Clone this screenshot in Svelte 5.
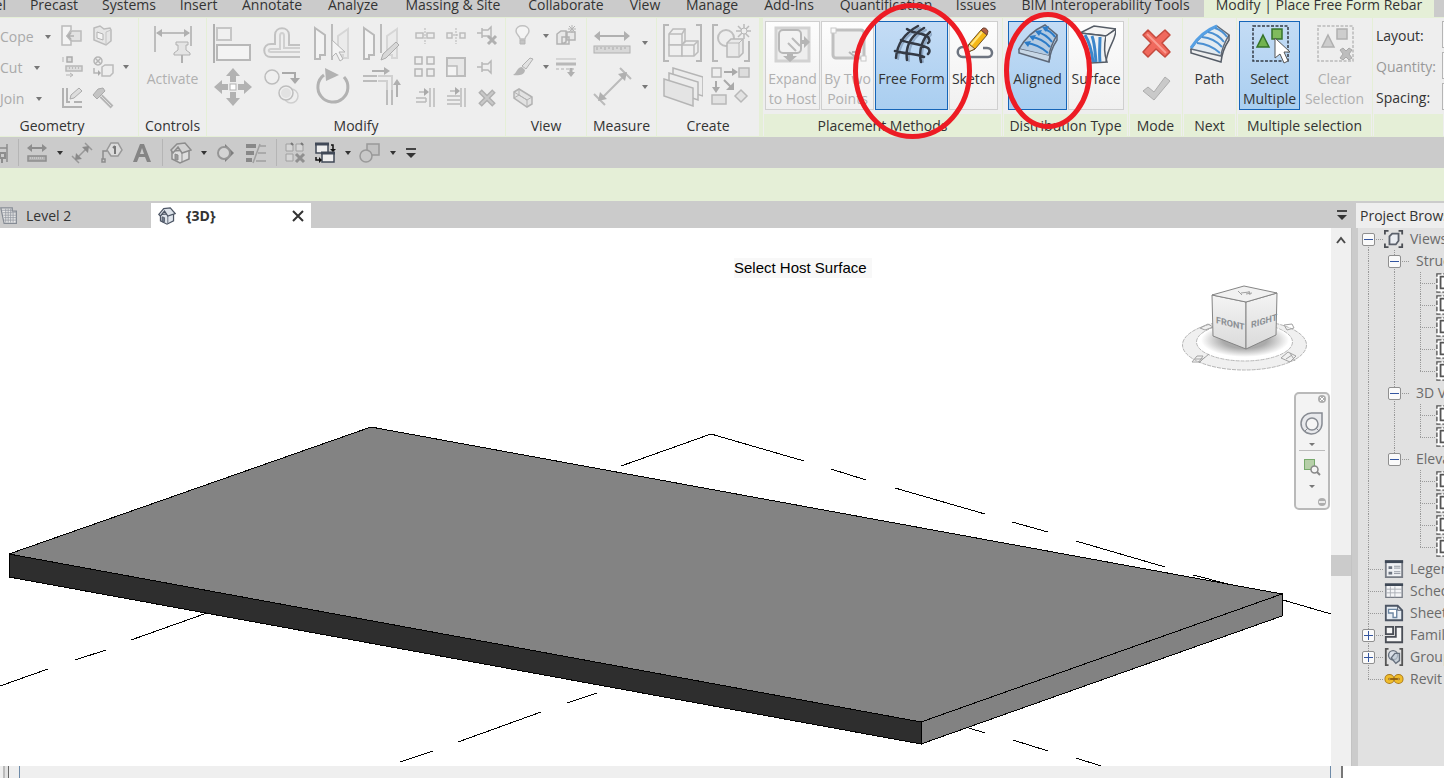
<script>
    const tabs = [
        "Steel",
        "Precast",
        "Systems",
        "Insert",
        "Annotate",
        "Analyze",
        "Massing & Site",
        "Collaborate",
        "View",
        "Manage",
        "Add-Ins",
        "Quantification",
        "Issues",
        "BIM Interoperability Tools",
        "Modify | Place Free Form Rebar",
    ];

    // 40x40 drawings
    const big = {
        activate: `<g fill="none" stroke="#bdbdbd" stroke-width="2"><path d="M2 2v26M38 2v20M4 9h32"/></g><path d="M3 9l6-4v8zM37 9l-6-4v8z" fill="#b0b0b0"/><path d="M23 18h12v3h-2v5l4 3v2H21v-2l4-3v-5h-2z" fill="#e4e4e4" stroke="#b0b0b0"/><path d="M29 31v8" stroke="#b0b0b0" stroke-width="2"/>`,
        align: `<path d="M2 1v39" stroke="#b0b0b0" stroke-width="2"/><rect x="5" y="5" width="14" height="12" fill="#f0f0f0" stroke="#c6c6c6" stroke-width="2"/><rect x="5" y="22" width="33" height="15" fill="#f3f3f3" stroke="#b8b8b8" stroke-width="2"/>`,
        offset: `<g fill="none" stroke="#c2c2c2" stroke-width="2"><path d="M38 22H27V12c0-9-14-9-14 0v9H9c-9 0-9 13 0 13h29"/><path d="M38 29H9c-3 0-3-3 0-3h9V13c0-4 4-4 4 0v12h16" stroke="#d0d0d0"/></g>`,
        mirrorPick: `<path d="M3 5l10 7v20H8v4H3z" fill="#f3f3f3" stroke="#b9b9b9" stroke-width="2"/><path d="M36 6l-10 7v19h5v3h5z" fill="#ebebeb" stroke="#d6d6d6" stroke-width="2"/><path d="M20 1v36" stroke="#bbb" stroke-width="2"/><path d="M20 17v17l4-4 4 8 3-2-4-7h6z" fill="#f4f4f4" stroke="#b4b4b4"/>`,
        mirrorDraw: `<path d="M2 5l10 7v20H7v4H2z" fill="#f3f3f3" stroke="#b9b9b9" stroke-width="2"/><path d="M35 6l-10 7v19h5v3h5z" fill="#ebebeb" stroke="#d6d6d6" stroke-width="2"/><path d="M19 1v29" stroke="#bbb" stroke-width="2"/><path d="M19 37l2-6 13-12 3 3-13 13z" fill="#d8d8d8" stroke="#ababab"/>`,
        move: `<g fill="#b2b2b2"><path d="M21 1l7 8h-4v6h-6V9h-4zM21 39l7-8h-4v-6h-6v6h-4zM2 20l8-7v4h6v6h-6v4zM40 20l-8-7v4h-6v6h6v4z"/></g><rect x="18" y="17" width="6" height="6" fill="#fff" stroke="#b2b2b2"/>`,
        copy: `<g fill="#efefef" stroke="#bdbdbd" stroke-width="1.5"><circle cx="10" cy="10" r="7"/><circle cx="29" cy="29" r="7" stroke="#cfcfcf"/><circle cx="24" cy="26" r="7"/></g><circle cx="24" cy="26" r="5" fill="#e2e2e2"/><path d="M20 6h13v6" fill="none" stroke="#a9a9a9" stroke-width="2"/><path d="M28 11h10l-5 6z" fill="#a9a9a9"/>`,
        rotate: `<path d="M12 8A15 15 0 1 0 32 10" fill="none" stroke="#b2b2b2" stroke-width="3"/><path d="M13 1l14 7-13 6z" fill="#b2b2b2"/>`,
        trim: `<path d="M10 4h14M35 30V18" stroke="#b0b0b0" stroke-width="2"/><path d="M22 0l6 4-6 4zM31 18l4-6 4 6z" fill="#b0b0b0"/><path d="M1 9h14M1 14h14M25 22v16M30 22v16" stroke="#bcbcbc" stroke-width="2"/><path d="M16 9h14v14M16 14h9v9" fill="none" stroke="#d0d0d0" stroke-width="2"/>`,
        measure: `<path d="M6 13h28" stroke="#b0b0b0" stroke-width="2"/><path d="M2 13l6-5v10zM38 13l-6-5v10z" fill="#b0b0b0"/><rect x="2" y="23" width="36" height="7" fill="#d8d8d8" stroke="#b0b0b0"/><path d="M5 24v3M9 24v2M13 24v3M17 24v2M21 24v3M25 24v2M29 24v3M33 24v2" stroke="#aaa"/>`,
        dimension: `<path d="M28 1l11 11M2 27l11 11M8 33L33 8" stroke="#bbb" stroke-width="2"/><path d="M35 5l-2 9-7-7zM6 34l2-9 7 7z" fill="#b0b0b0"/>`,
        group: `<path d="M6 2H1v36h5M33 2h5v36h-5" fill="none" stroke="#b8b8b8" stroke-width="2"/><g fill="#efefef" stroke="#bcbcbc" stroke-width="1.5"><path d="M6 11l4-5h12v12l-3 4H6z"/><path d="M6 11h13v11M19 11l3-5" fill="none"/><rect x="6" y="22" width="13" height="11"/><path d="M19 22l4-4h12v11l-4 4H19z"/><path d="M19 22h12v11M31 22l4-4" fill="none"/></g>`,
        similar: `<path d="M7 2H2v36h5M33 38h5V18" fill="none" stroke="#b8b8b8" stroke-width="2"/><circle cx="15" cy="15" r="8" fill="#eee" stroke="#c0c0c0" stroke-width="2"/><path d="M16 20l4-4h12v14l-4 4H16z" fill="#e9e9e9" stroke="#b8b8b8" stroke-width="1.5"/><path d="M16 20h12v13M28 20l4-4" fill="none" stroke="#b8b8b8"/><path d="M33 1v15M25 8h15M27 3l11 11M38 3L27 14" stroke="#bbb" stroke-width="1.5"/><circle cx="33" cy="8" r="3" fill="#eee" stroke="#b8b8b8"/>`,
        assembly: `<g fill="#ececec" stroke="#b5b5b5" stroke-width="1.5"><path d="M10 1l30 9v19l-30-9z"/><path d="M6 6l29 9v18L6 23z"/><path d="M1 12l29 9v18L1 29z" fill="#e4e4e4"/></g>`,
        parts: `<g fill="#eee" stroke="#b8b8b8" stroke-width="1.5"><rect x="1" y="1" width="9" height="9"/><rect x="28" y="1" width="10" height="9" fill="#ddd"/><rect x="1" y="28" width="14" height="9" fill="#e2e2e2"/><path d="M30 23l6 6-6 6-6-6z" fill="#e2e2e2"/></g><path d="M13 5h9M5 14v8M13 13l7 7" stroke="#a9a9a9" stroke-width="2"/><path d="M21 1l6 4-6 4zM1 20h8l-4 6zM23 15v8h-8z" fill="#a9a9a9"/>`,
        expand: `<rect x="3" y="4" width="33" height="33" fill="#eee" stroke="#d2d2d2" stroke-width="3"/><rect x="6" y="6" width="22" height="23" rx="4" fill="#f2f2f2" stroke="#b8b8b8" stroke-width="2"/><path d="M15 19l8 8M19 14l8 8" stroke="#bbb" stroke-width="2"/><path d="M28 16h3v-4l6 6-6 6v-4h-3zM14 30h6v2h4l-7 6-7-6h4z" fill="#b5b5b5"/>`,
        twoPoints: `<rect x="5" y="6" width="31" height="28" rx="3" fill="#eee" stroke="#c0c0c0" stroke-width="3"/><g fill="#fafafa" stroke="#c8c8c8"><rect x="3" y="4" width="5" height="5"/><rect x="33" y="32" width="5" height="5"/></g><path d="M21 28l9 7M32 19v9h-8" stroke="#b5b5b5" stroke-width="2" fill="none"/>`,
        freeForm: `<g fill="none" stroke="#8fa9c6" stroke-width="2" stroke-linecap="round"><path d="M28 4C14 11 8 20 6 35M34 6C22 12 16 22 17 37M40 10C33 16 28 26 31 38"/></g><g fill="none" stroke="#343a45" stroke-width="2.5" stroke-linecap="round"><path d="M26 2C13 9 5 20 4 34M32 4C20 11 13 22 15 36M38 8C31 14 26 26 29 38M15 5c6 5 15 3 21 8q3 4 0 6M9 16c8 4 19 3 27 8q3 3 0 6M3 27c9 3 20 2 29 6"/></g>`,
        sketch: `<path d="M16 23H9c-7 0-7 10 0 10h25c6 0 5-9-1-9h-4" fill="none" stroke="#6d7480" stroke-width="2.5"/><path d="M12 29l3-9L27 6l6 5-12 14z" fill="#f5b716" stroke="#725121"/><path d="M17 21L28 8" stroke="#ffe47a" stroke-width="2"/><path d="M27 6l2-2q3-1 5 3l-1 4z" fill="#b35f43" stroke="#714937"/><path d="M12 29l3-9 6 5z" fill="#f2dfc0" stroke="#725121"/><path d="M12 29l1-3 2 1z" fill="#222"/>`,
        aligned: `<path d="M27 1C14 7 6 16 1 25l30 7c1-9 4-14 8-21z" fill="#b4cbe2" stroke="#5d6878" stroke-width="1.5"/><path d="M1 25v4l30 9 1-6" fill="#c7d7e6" stroke="#5d6878" stroke-width="1.5"/><path d="M39 11v5c-4 6-7 12-8 22" fill="none" stroke="#5d6878" stroke-width="1.5"/><path d="M30 29Q20 20 8 19M32 23Q24 14 13 13M34 18Q28 10 19 8M37 13Q33 7 26 5" stroke="#2c7cc8" stroke-width="2" fill="none"/><path d="M6 18l7-1-3 6zM11 12l7-1-3 6zM17 7l7-1-3 6zM24 3l7-1-3 6z" fill="#2c7cc8"/>`,
        surface: `<path d="M4 9L18 2l22 3-10 7z" fill="#f4f4f4" stroke="#555c66" stroke-width="1.5"/><path d="M4 9l26 3c-2 9-2 18 1 26l-16 1C12 28 10 18 4 9z" fill="#edf1f4" stroke="#555c66" stroke-width="1.5"/><path d="M30 12l10-7c0 12-8 16-10 33" fill="#f6f6f6" stroke="#555c66" stroke-width="1.5"/><path d="M9 11c5 8 7 18 8 27M16 12c3 8 3 16 4 26M24 13c0 8-1 16 0 25" stroke="#3c86ca" stroke-width="3" fill="none"/>`,
        cancel: `<path d="M12 7l8 8 9-8 5 5-8 8 8 9-5 5-9-8-8 8-5-5 8-9-8-8z" fill="#f0695d" stroke="#c54a3e" stroke-width="1.5" stroke-linejoin="round"/><path d="M11 11l19 19" stroke="#f99d92" stroke-width="2"/>`,
        finish: `<path d="M7 23l5-4 6 5L29 9l5 4-16 19z" fill="#c9c9c9" stroke="#adadad" stroke-linejoin="round"/>`,
        path: `<path d="M27 2C14 8 6 17 1 25l30 7c1-9 4-14 8-21z" fill="#e3ebf1" stroke="#626b77" stroke-width="1.5"/><path d="M1 25v4l30 9 1-6M39 11v5c-4 6-7 12-8 22" fill="none" stroke="#555c66" stroke-width="1.5"/><path d="M1 24C6 16 14 7 27 2" fill="none" stroke="#56a0e4" stroke-width="3"/><path d="M30 29Q20 20 7 19M32 23Q24 14 12 13M34 18Q28 10 18 8M37 13Q33 7 25 4" stroke="#4b90d2" stroke-width="2" fill="none"/>`,
        select: `<rect x="3" y="2" width="35" height="35" fill="none" stroke="#333b46" stroke-width="1.5" stroke-dasharray="3 1.5"/><path d="M13 11l6 12H7z" fill="#72b34f" stroke="#35732a" stroke-width="1.5"/><rect x="22" y="5" width="10" height="10" fill="#80bb5d" stroke="#35732a" stroke-width="1.5"/><path d="M25 14v20l5-4 4 9 4-2-4-9h6z" fill="#fff" stroke="#575757"/>`,
        clear: `<rect x="3" y="2" width="35" height="35" fill="none" stroke="#bababa" stroke-width="1.5" stroke-dasharray="3 1.5"/><path d="M13 11l6 12H7z" fill="#cdcdcd" stroke="#b0b0b0" stroke-width="1.5"/><rect x="22" y="5" width="10" height="10" fill="#cdcdcd" stroke="#b0b0b0" stroke-width="1.5"/><path d="M25 26l3-2 3 3 3-3 3 2-3 4 3 4-3 2-3-3-3 3-3-2 3-4z" fill="#bdbdbd" stroke="#a9a9a9"/>`,
    };

    // 22x22 drawings
    const small = {
        cope: `<path d="M1 1h9v4l-4 6 4 5v4H1z" fill="#f4f4f4" stroke="#bbb" stroke-width="1.5"/><path d="M11 6h9v10h-9l-5-5z" fill="#e2e2e2" stroke="#bbb" stroke-width="1.5"/><path d="M8 11h5M10 8l-3 3 3 3" stroke="#b0b0b0" stroke-width="1.5" fill="none"/>`,
        wallOpening: `<path d="M2 3l6-2 4 3 6-1 1 2v11l-5 4-12-5z" fill="#e6e6e6" stroke="#bbb" stroke-width="1.5"/><path d="M5 7l6 2v6l-6-2z" fill="#f4f4f4" stroke="#b2b2b2"/><path d="M14 7v13M14 7l5-2" stroke="#c4c4c4"/>`,
        level: `<path d="M2 1v5M5 19h6M9 17l3 2-3 2" stroke="#b5b5b5" fill="none"/><path d="M6 1h5v5H6z" fill="#ddd" stroke="#aaa" stroke-width="1.5"/><path d="M5 10h16v5H5z" fill="#ddd" stroke="#b8b8b8" stroke-width="1.5"/><path d="M8 12h11" stroke="#999" stroke-dasharray="1 2"/>`,
        unjoin: `<circle cx="6" cy="5" r="4" fill="none" stroke="#b5b5b5" stroke-width="1.5"/><path d="M3 2l6 6M9 2L3 8M2 12v5h5" stroke="#b5b5b5" stroke-width="1.5" fill="none"/><path d="M6 14l3 3-3 3z" fill="#aaa"/><path d="M10 11l3-2h8v8l-3 3h-8z" fill="#eee" stroke="#bbb" stroke-width="1.5"/>`,
        wallJoin: `<path d="M2 1v19h19M6 1v14h3M13 15h8" stroke="#b2b2b2" stroke-width="2" fill="none"/><path d="M9 12l1-4 8-7 3 3-8 7z" fill="#ddd" stroke="#aaa"/>`,
        hammer: `<path d="M1 8l5-6 5-1 2 3-8 8z" fill="#c4c4c4" stroke="#aaa"/><path d="M9 9l11 11" stroke="#b5b5b5" stroke-width="4"/><path d="M9 9l10 10" stroke="#ddd"/>`,
        split: `<path d="M2 8h7v5H2zM13 8h7v5h-7z" fill="#eee" stroke="#bdbdbd" stroke-width="1.5"/><path d="M11 3v16" stroke="#b5b5b5" stroke-dasharray="2 1"/>`,
        splitGap: `<path d="M2 8h5v5H2zM15 8h5v5h-5z" fill="#eee" stroke="#bdbdbd" stroke-width="1.5"/><path d="M11 3v16M8 10h6" stroke="#b5b5b5" stroke-dasharray="2 1"/>`,
        unpin: `<path d="M1 8h5M6 3v10M6 5h6l3-3v11l-3-2H6" fill="none" stroke="#b8b8b8" stroke-width="1.5"/><path d="M12 11l8 8M20 11l-8 8" stroke="#b0b0b0" stroke-width="3"/>`,
        array: `<g fill="#eee" stroke="#b5b5b5" stroke-width="1.5"><path d="M1 1h7v7H1zM13 1h7v7h-7zM1 13h7v7H1zM13 13h7v7h-7z"/></g>`,
        scale: `<path d="M2 2h18v18H2z" fill="#e7e7e7" stroke="#bbb" stroke-width="2"/><path d="M2 10h10v10H2z" fill="#f3f3f3" stroke="#bbb" stroke-width="1.5"/>`,
        pin: `<path d="M1 11h5M6 6v10M6 8h6l3-3v12l-3-3H6" fill="none" stroke="#b8b8b8" stroke-width="1.5"/>`,
        trimOne: `<path d="M2 11h10M2 15h10M5 5h7M20 1v19M16 1v19M12 11v4" stroke="#bbb" stroke-width="1.5"/><path d="M10 1l5 4-5 4z" fill="#aaa"/>`,
        trimMany: `<path d="M2 9h13M2 13h13M2 17h13M5 4h7M20 1v19M16 1v19" stroke="#bbb" stroke-width="1.5"/><path d="M10 0l5 4-5 4z" fill="#aaa"/>`,
        remove: `<path d="M4 4l14 14M18 4L4 18" stroke="#b0b0b0" stroke-width="5"/><path d="M5 5l12 12M17 5L5 17" stroke="#c8c8c8" stroke-width="2"/>`,
        bulb: `<path d="M8 14c0-3-4-4-4-8 0-7 13-7 13 0 0 4-4 5-4 8z" fill="#f4f4f4" stroke="#c0c0c0" stroke-width="1.5"/><path d="M8 15h5v4H8z" fill="#c4c4c4" stroke="#b5b5b5"/>`,
        displace: `<g fill="#e8e8e8" stroke="#b2b2b2" stroke-width="1.5"><path d="M2 9l4-3h5v11l-4 2H2zM12 7h8v8h-8zM7 12h7v7H7z"/></g><path d="M17 0v8M13 4h8M14 1l6 6M20 1l-6 6" stroke="#b5b5b5"/>`,
        brush: `<path d="M10 10l8-8 3 1-7 10z" fill="#e2e2e2" stroke="#b0b0b0"/><path d="M1 19c4-2 4-8 9-8l3 3c0 5-7 6-12 5z" fill="#b5b5b5"/>`,
        thinLines: `<path d="M1 3h20" stroke="#bbb"/><path d="M1 8h20" stroke="#b8b8b8" stroke-width="3"/><path d="M1 13h20" stroke="#b0b0b0" stroke-dasharray="3 2"/><path d="M16 12v4" stroke="#b0b0b0" stroke-width="3"/><path d="M12 16h8l-4 5z" fill="#b0b0b0"/>`,
        sectionBox: `<path d="M2 5l5-3 13 8v7l-5 3-13-9z" fill="#e2e2e2" stroke="#b2b2b2" stroke-width="1.5"/><path d="M2 5l13 8v7M15 13l5-3M7 2v6l8 5M2 11l5-3" fill="none" stroke="#b2b2b2"/>`,
        qatPin: `<path d="M7 2v18M0 6h7" stroke="#8d8d8d" stroke-width="1.5"/><path d="M0 11h5v5H0zM2 16v5" fill="none" stroke="#8d8d8d" stroke-width="2"/>`,
        qatMeasure: `<path d="M4 6h14" stroke="#8d8d8d" stroke-width="2"/><path d="M2 14h18v5H2z" fill="#b0b0b0" stroke="#8d8d8d" stroke-width="1.5"/><path d="M1 6l5-4v8zM21 6l-5-4v8z" fill="#8d8d8d"/><path d="M4 16h14" stroke="#ddd" stroke-dasharray="1 1"/>`,
        qatDimension: `<path d="M5 17L17 5M1 14l7 7M14 1l7 7" stroke="#989898" stroke-width="1.5"/><path d="M4 18l1-7 6 6zM18 4l-1 7-6-6z" fill="#8a8a8a"/>`,
        qatTag: `<path d="M10 1h7l4 7-4 6h-7L6 8z" fill="#dcdcdc" stroke="#999" stroke-width="1.5"/><path d="M14 4v8M12 6l2-2" stroke="#777" stroke-width="2"/><path d="M6 9H2v8M1 17h3v3H1z" fill="none" stroke="#8d8d8d" stroke-width="1.5"/>`,
        qatText: `<path d="M2 20L9 2h4l7 18h-4l-2-5H8l-2 5zM9 12h4l-2-6z" fill="#858585" fill-rule="evenodd"/>`,
        qatHome: `<path d="M2 9v8l8 4 9-4V8z" fill="#dedede" stroke="#8d8d8d" stroke-width="1.5"/><path d="M1 8l6-6 8-1 6 7-9 3-4-6-5 6z" fill="#d2d2d2" stroke="#8d8d8d" stroke-width="1.5"/><path d="M12 10v10M5 12v6h3v-5z" stroke="#8d8d8d" fill="#999"/>`,
        section: `<path d="M10 2l9 9-9 9z" fill="#7d7d7d"/><circle cx="9" cy="11" r="6" fill="#d4d4d4" stroke="#969696" stroke-width="2"/>`,
        qatLines: `<path d="M1 4h10M1 11h8M1 18h6" stroke="#888" stroke-width="4"/><path d="M8 21L15 2M15 4h6M13 11h8M11 19h10" stroke="#a0a0a0" stroke-width="1.5"/>`,
        closeHidden: `<path d="M2 2h7v7H2zM12 2h7v7h-7zM2 12h7v7H2z" fill="#d6d6d6" stroke="#a0a0a0"/><path d="M7 1l2 2M17 1l2 2" stroke="#777" stroke-width="2"/><path d="M12 12l8 8M20 12l-8 8" stroke="#909090" stroke-width="3"/>`,
        switchWindows: `<path d="M2 2h12v9H2z" fill="#eee" stroke="#414957" stroke-width="1.5"/><path d="M1 2h14" stroke="#414957" stroke-width="3"/><path d="M8 11h12v9H8z" fill="#eee" stroke="#414957" stroke-width="1.5"/><path d="M7 11h14" stroke="#414957" stroke-width="3"/><path d="M17 3h2v4M2 15v3h4" stroke="#111" stroke-width="1.5" fill="none"/><path d="M16 7h6l-3 3zM5 15v6l3-3z" fill="#111"/>`,
        shapes: `<path d="M8 2h12v11H8z" fill="#c2c2c2" stroke="#999" stroke-width="1.5"/><circle cx="7" cy="14" r="6" fill="#c8c8c8" stroke="#999" stroke-width="1.5"/>`,
        more: `<path d="M6 7h10" stroke="#444" stroke-width="2"/><path d="M6 11h10l-5 5z" fill="#333"/>`,
        plan: `<path d="M1 1h14v4h5v15H5z" fill="#e8e8e8" stroke="#858b94" stroke-width="1.5"/><path d="M2 4h13M3 7h17M4 10h16M5 13h15M5 16h15M7 2v17M10 2v17M13 2v17M16 6v13" stroke="#969ba3"/>`,
        home: `<path d="M3 9v8l8 4 8-4V8z" fill="#dfe5ec" stroke="#4c5564" stroke-width="1.5"/><path d="M1 9l6-7 8-1 6 7-9 3-4-6-5 6z" fill="#dde3ea" stroke="#4c5564" stroke-width="1.5"/><path d="M12 11v9M5 12v6h3v-5z" stroke="#4c5564" fill="#6f7a8a"/>`,
        views: `<path d="M1 6V2h4M16 2h4v4M1 16v4h4M20 16v4h-4" fill="none" stroke="#4c4f55" stroke-width="2"/><path d="M6 8l3-3h7v8l-3 4H6z" fill="#eaedf2" stroke="#5a606b" stroke-width="2"/>`,
        sheetOff: `<path d="M1 1h20v20H1z" fill="#fff" stroke="#555" stroke-width="1.5" stroke-dasharray="5 2"/><path d="M5 4h17v13H5z" fill="none" stroke="#555" stroke-width="2"/>`,
        legend: `<path d="M2 2h18v18H2z" fill="#eef0f3" stroke="#777c85" stroke-width="2"/><path d="M1 3h20" stroke="#3e4856" stroke-width="3"/><path d="M5 8h4v3H5zM5 14h4v3H5z" fill="#6b7380"/><path d="M11 8h7M11 10h7M11 14h7M11 16h7" stroke="#8c929c"/>`,
        schedule: `<path d="M2 4h18v14H2z" fill="#f4f5f7" stroke="#777c85" stroke-width="1.5"/><path d="M1 4h20" stroke="#3e4856" stroke-width="3"/><path d="M2 9h18M2 13h18M7 6v12M12 6v12" stroke="#a9adb5"/>`,
        sheet: `<path d="M2 3h13l5 5v11H2z" fill="#e6ecf3" stroke="#4c5564" stroke-width="2"/><path d="M5 7h9v9h-4v-5H5z" fill="#fff" stroke="#6c86a2" stroke-width="1.5"/><path d="M15 3v5h5" fill="none" stroke="#4c5564"/>`,
        family: `<path d="M2 2h8v8H2z" fill="#f5f5f5" stroke="#4a4e56" stroke-width="2"/><path d="M13 2h7v17H2v-6h11z" fill="#f5f5f5" stroke="#4a4e56" stroke-width="2"/>`,
        groups: `<path d="M5 2H2v18h3M17 2h3v18h-3" fill="none" stroke="#555" stroke-width="2"/><circle cx="10" cy="9" r="5" fill="#d9dfe7" stroke="#66707d" stroke-width="1.5"/><path d="M8 12l4-5h5v8l-4 3z" fill="#bfcad6" fill-opacity=".7" stroke="#66707d" stroke-width="1.5"/>`,
        link: `<g fill="none" stroke="#a9791a" stroke-width="5"><rect x="3" y="8" width="6" height="6" rx="3"/><rect x="13" y="8" width="6" height="6" rx="3"/></g><g fill="none" stroke="#f0bd2c" stroke-width="3"><rect x="3" y="8" width="6" height="6" rx="3"/><rect x="13" y="8" width="6" height="6" rx="3"/></g><path d="M7 11h8" stroke="#8a5c10" stroke-width="2"/>`,
    };

    const modifyTools = ["align", "offset", "mirrorPick", "mirrorDraw", "move", "copy", "rotate", "trim"];
    const modifySmall = ["split", "splitGap", "unpin", "array", "scale", "pin", "trimOne", "trimMany", "remove"];

    // guides: one letter per 26px column
    // l line, t tee, e end, b blank, M/m/n/p toggles
    const tree = [
        { guides: "M", icon: "views", label: "Views (all)" },
        { guides: "lm", label: "Structural Plans" },
        { guides: "llt", icon: "sheetOff" },
        { guides: "llt", icon: "sheetOff" },
        { guides: "llt", icon: "sheetOff" },
        { guides: "llt", icon: "sheetOff" },
        { guides: "lle", icon: "sheetOff" },
        { guides: "lm", label: "3D Views" },
        { guides: "llt", icon: "sheetOff" },
        { guides: "lle", icon: "sheetOff" },
        { guides: "ln", label: "Elevations" },
        { guides: "lbt", icon: "sheetOff" },
        { guides: "lbt", icon: "sheetOff" },
        { guides: "lbt", icon: "sheetOff" },
        { guides: "lbe", icon: "sheetOff" },
        { guides: "t", icon: "legend", label: "Legends" },
        { guides: "t", icon: "schedule", label: "Schedules" },
        { guides: "t", icon: "sheet", label: "Sheets" },
        { guides: "p", icon: "family", label: "Families" },
        { guides: "p", icon: "groups", label: "Groups" },
        { guides: "e", icon: "link", label: "Revit Links" },
    ];
    const up = "ltemnp";
    const down = "ltMmp";
    const toggles = "Mmnp";
</script>

{#snippet bigIcon(name)}
    <svg class="big" viewBox="0 0 40 40" aria-hidden="true">{@html big[name]}</svg>
{/snippet}

{#snippet smallIcon(name)}
    <svg class="small" viewBox="0 0 22 22" aria-hidden="true">{@html small[name]}</svg>
{/snippet}

{#snippet tool(name)}
    <button class="tool" aria-label={name}>{@render smallIcon(name)}</button>
{/snippet}

{#snippet bigTool(name)}
    <button class="tool" aria-label={name}>{@render bigIcon(name)}</button>
{/snippet}

{#snippet caret()}
    <button class="caret" aria-label="More options"></button>
{/snippet}

{#snippet command(name, text, kind = "")}
    <button class="command {kind}">
        {@render bigIcon(name)}
        <span>{text}</span>
    </button>
{/snippet}

<div class="app">
    <nav class="tabs">
        {#each tabs as tab, i}
            <a href="#tab{i}" class:active={i === tabs.length - 1}>{tab}</a>
        {/each}
    </nav>

    <div class="ribbon">
        <section class="panel geometry">
            <div class="body">
                <div class="words">
                    <div><button class="word">Cope</button>{@render caret()}</div>
                    <div><button class="word">Cut</button>{@render caret()}</div>
                    <div><button class="word">Join</button>{@render caret()}</div>
                </div>
                <div class="smalls two">
                    {@render tool("cope")}
                    {@render tool("wallOpening")}
                    {@render tool("level")}
                    {@render tool("unjoin")}
                    {@render tool("wallJoin")}
                    {@render tool("hammer")}
                </div>
                {@render caret()}
            </div>
            <h2>Geometry</h2>
        </section>

        <section class="panel controls">
            <div class="body">{@render command("activate", "Activate", "plain off")}</div>
            <h2>Controls</h2>
        </section>

        <section class="panel modify">
            <div class="body">
                <div class="bigs">
                    {#each modifyTools as name}
                        {@render bigTool(name)}
                    {/each}
                </div>
                <div class="smalls three">
                    {#each modifySmall as name}
                        {@render tool(name)}
                    {/each}
                </div>
            </div>
            <h2>Modify</h2>
        </section>

        <section class="panel view">
            <div class="body view-tools">
                {@render tool("bulb")}
                {@render caret()}
                {@render tool("displace")}
                {@render tool("brush")}
                {@render caret()}
                {@render tool("thinLines")}
                {@render tool("sectionBox")}
            </div>
            <h2>View</h2>
        </section>

        <section class="panel measure">
            <div class="body measure-tools">
                {@render bigTool("measure")}
                {@render caret()}
                {@render bigTool("dimension")}
                {@render caret()}
            </div>
            <h2>Measure</h2>
        </section>

        <section class="panel create">
            <div class="body create-tools">
                {@render bigTool("group")}
                {@render bigTool("similar")}
                {@render bigTool("assembly")}
                {@render bigTool("parts")}
            </div>
            <h2>Create</h2>
        </section>

        <section class="panel context placement">
            <div class="body">
                {@render command("expand", "Expand to Host", "off")}
                {@render command("twoPoints", "By Two Points", "off")}
                {@render command("freeForm", "Free Form", "on")}
                {@render command("sketch", "Sketch")}
            </div>
            <h2>Placement Methods</h2>
        </section>

        <section class="panel context distribution">
            <div class="body">
                {@render command("aligned", "Aligned", "on")}
                {@render command("surface", "Surface")}
            </div>
            <h2>Distribution Type</h2>
        </section>

        <section class="panel context mode">
            <div class="body">
                {@render bigTool("cancel")}
                {@render bigTool("finish")}
            </div>
            <h2>Mode</h2>
        </section>

        <section class="panel context next">
            <div class="body">{@render command("path", "Path", "plain")}</div>
            <h2>Next</h2>
        </section>

        <section class="panel context multiple">
            <div class="body">
                {@render command("select", "Select Multiple", "on")}
                {@render command("clear", "Clear Selection", "plain off")}
            </div>
            <h2>Multiple selection</h2>
        </section>

        <section class="panel context layout">
            <div class="body">
                <label for="layout">Layout:</label>
                <select id="layout"><option></option></select>
                <label for="quantity" class="dim">Quantity:</label>
                <input id="quantity" disabled />
                <label for="spacing">Spacing:</label>
                <input id="spacing" />
            </div>
            <h2></h2>
        </section>

        <svg class="marks" width="300" height="140" viewBox="820 0 300 140" aria-hidden="true">
            <ellipse cx="912.5" cy="71" rx="57" ry="65.5" />
            <ellipse cx="1048" cy="70.5" rx="41.5" ry="56" />
        </svg>
    </div>

    <div class="quick">
        <span class="cut">{@render smallIcon("qatPin")}</span>
        <i></i>
        {@render tool("qatMeasure")}
        {@render caret()}
        {@render tool("qatDimension")}
        {@render tool("qatTag")}
        {@render tool("qatText")}
        <i></i>
        {@render tool("qatHome")}
        {@render caret()}
        {@render tool("section")}
        {@render tool("qatLines")}
        <i></i>
        {@render tool("closeHidden")}
        {@render tool("switchWindows")}
        {@render caret()}
        {@render tool("shapes")}
        {@render caret()}
        <button class="more" aria-label="Customize">{@render smallIcon("more")}</button>
    </div>

    <div class="options"></div>

    <main>
        <div class="workspace">
            <div class="docs">
                <a href="#level2" class="doc">{@render smallIcon("plan")}<span>Level 2</span></a>
                <div class="doc current">
                    {@render smallIcon("home")}
                    <span>{"{3D}"}</span>
                    <button aria-label="Close">
                        <svg width="14" height="14" viewBox="0 0 14 14"><path d="M2 2l10 10M12 2L2 12" stroke="#333" stroke-width="2" /></svg>
                    </button>
                </div>
                <button class="more" aria-label="Open views">{@render smallIcon("more")}</button>
            </div>

            <div class="stage">
                <div class="viewport">
                    <svg class="scene" viewBox="0 228 1331 538" preserveAspectRatio="xMinYMin meet" shape-rendering="crispEdges">
                        <path
                            class="edge"
                            d="M621 466L711 434L804 461M831 469L866 480M895 488L985 514M1012 522L1048 532M1076 541L1165 567M1193 575L1228 584M1283 600L1331 614M0 686L48 669M75 660L106 650M131 640L207 613M400 762L433 751M458 742L541 712M567 703L597 693M969 728L985 733M1013 740L1048 751M1076 758L1101 766"
                        />
                        <path class="edge" d="M371 427L1282 594L921 722L9 554z" fill="#838383" />
                        <path class="edge" d="M9 554L921 722V744L9 577z" fill="#2e2e2e" />
                        <path class="edge" d="M921 722L1282 594V616L921 744z" fill="#828282" />
                    </svg>

                    <p class="prompt">Select Host Surface</p>

                    <svg class="cube" width="128" height="90" viewBox="1181 284 128 90">
                        <defs>
                            <radialGradient id="shade">
                                <stop offset=".5" stop-color="#aaa" />
                                <stop offset="1" stop-color="#fff" />
                            </radialGradient>
                            <linearGradient id="face" x2="0" y2="1">
                                <stop stop-color="#f4f4f4" />
                                <stop offset="1" stop-color="#dadada" />
                            </linearGradient>
                        </defs>
                        <ellipse cx="1244.5" cy="345" rx="62" ry="25" fill="#f0f0f0" stroke="#b4b4b4" stroke-dasharray="4 1" />
                        <ellipse cx="1244.5" cy="342" rx="48" ry="19" fill="#fff" stroke="#b8b8b8" stroke-dasharray="4 1" />
                        <ellipse cx="1245" cy="340" rx="44" ry="17" fill="url(#shade)" />
                        <g fill="none" stroke="#a2a2a2">
                            <path d="M1192 362l5-6h6l-4 6zM1195 359h8l6-5M1199 363l6-6M1281 358l7-6 8 4-6 6zM1286 359l6-4M1290 353l5 8M1200 328l8-4 5 3-8 3zM1284 325l8-1 2 4-7 2z" />
                        </g>
                        <path d="M1212 295L1246 302V349L1213 336z" fill="url(#face)" stroke="#858585" />
                        <path d="M1246 302L1277 293L1276 335L1246 349z" fill="url(#face)" stroke="#858585" />
                        <path d="M1212 295L1244 286L1277 293L1246 302z" fill="#f1f1f1" stroke="#858585" />
                        <path d="M1238 291l4 4M1241 293l8-1M1246 294l6-1M1249 291l1 4" stroke="#a0a0a0" />
                        <text transform="translate(1216 323) skewY(14)">FRONT</text>
                        <text transform="translate(1251 328) skewY(-17)">RIGHT</text>
                    </svg>

                    <div class="navbar">
                        <svg width="36" height="120" viewBox="1294 391 36 120">
                            <rect x="1295" y="393" width="34" height="116" rx="4" fill="#f3f3f3" stroke="#b9b9b9" stroke-width="2" />
                            <circle cx="1322" cy="399" r="4" fill="#adadad" />
                            <path d="M1320 397l4 4M1324 397l-4 4" stroke="#fff" />
                            <path d="M1312 413h10v11a10.500 10.500 0 1 1-10-11z" fill="#e8e9ec" stroke="#878b92" stroke-width="1.5" />
                            <circle cx="1312" cy="424" r="6" fill="#f5f5f5" stroke="#878b92" stroke-width="1.5" />
                            <path d="M1305 431l3-3M1319 431l-3-3" stroke="#878b92" />
                            <path d="M1309 443h6l-3 3zM1309 485h6l-3 3z" fill="#777" />
                            <path d="M1299 450.5h26" stroke="#bbb" />
                            <rect x="1304.5" y="459.5" width="10" height="10" fill="#b6cfa8" stroke="#77aa6b" />
                            <circle cx="1314.5" cy="469.5" r="3.5" fill="#f4f4f4" stroke="#888" stroke-width="1.5" />
                            <path d="M1317 472l3 3" stroke="#888" stroke-width="2" />
                            <circle cx="1322" cy="502" r="4" fill="#adadad" />
                            <path d="M1319 502h6" stroke="#fff" stroke-width="1.5" />
                        </svg>
                    </div>
                </div>
                <div class="scrollbar">
                    <svg width="20" height="24" viewBox="0 0 20 24"><path d="M6 15l4-5 4 5" fill="none" stroke="#4a4a4a" stroke-width="2" /></svg>
                    <div class="thumb"></div>
                </div>
            </div>
        </div>

        <aside>
            <h3>Project Browser</h3>
            <ul>
                {#each tree as row}
                    <li>
                        {#each row.guides as g, i}
                            <span
                                class="guide"
                                class:up={up.includes(g)}
                                class:down={down.includes(g)}
                                class:across={i === row.guides.length - 1}
                            >
                                {#if toggles.includes(g)}
                                    <button class:plus={g === "p"} aria-label="Toggle {row.label}"></button>
                                {/if}
                            </span>
                        {/each}
                        {#if row.icon}{@render smallIcon(row.icon)}{/if}
                        {#if row.label}<span class="name">{row.label}</span>{/if}
                    </li>
                {/each}
            </ul>
        </aside>
    </main>

    <footer><div class="left"></div><div class="right"></div></footer>
</div>

<style>
    :global(body) {
        margin: 0;
        background: #fff;
    }

    .app {
        display: flex;
        flex-direction: column;
        min-height: 100vh;
        overflow: hidden;
        font: 14px/20px "Segoe UI", "Open Sans", "Noto Sans", sans-serif;
        color: #333;
    }

    button {
        padding: 0;
        border: 0;
        background: none;
        font: inherit;
        color: inherit;
    }

    svg {
        display: block;
        flex: none;
    }

    .big {
        width: 40px;
        height: 40px;
    }

    .small {
        width: 22px;
        height: 22px;
    }

    .tabs {
        display: grid;
        grid-template-columns: 18px 72px 78px 61px 86px 76px 124px 102px 56px 78px 76px 118px 62px 197px 230px;
        grid-template-rows: 17px;
        align-items: end;
        overflow: hidden;
        background: #cbcbcb;

        & a {
            display: flex;
            justify-content: center;
            color: inherit;
            line-height: 24px;
            text-decoration: none;
            white-space: nowrap;
        }

        & a:first-child {
            justify-content: flex-end;
            padding-right: 12px;
        }

        & .active {
            background: #e5efd7;
        }
    }

    .ribbon {
        position: relative;
        display: flex;
        gap: 1px;
        padding: 1px 0;
        background: #e5efd7;
    }

    .panel {
        display: flex;
        flex-direction: column;
        flex: none;
        background: #eee;

        & .body {
            display: flex;
            height: 96px;
            box-sizing: border-box;
            padding-top: 3px;
        }

        & h2 {
            height: 22px;
            margin: 0;
            font-size: 14px;
            font-weight: 400;
            line-height: 24px;
            text-align: center;
            white-space: nowrap;
        }
    }

    .context {
        & h2 {
            margin: 0 1px;
            background: #e5efd7;
        }

        & .body {
            gap: 1px;
            padding-left: 2px;
        }
    }

    .geometry {
        width: 138px;

        & h2 {
            padding-right: 34px;
        }

        & .body > :global(.caret) {
            height: 91px;
        }
    }

    .controls {
        width: 67px;
    }

    .modify {
        width: 298px;
    }

    .view {
        width: 80px;
    }

    .measure {
        width: 69px;
    }

    .create {
        width: 102px;
    }

    .placement {
        width: 239px;
        margin-left: 3px;

        & .command:nth-child(1) {
            width: 55px;
        }

        & .command:nth-child(2) {
            width: 53px;
        }

        & .command:nth-child(3) {
            width: 73px;
        }

        & .command:nth-child(4) {
            width: 49px;
        }
    }

    .distribution {
        width: 125px;

        & .body {
            padding-left: 5px;
        }

        & .command {
            width: 56px;
        }

        & .on {
            width: 59px;
        }
    }

    .mode {
        width: 53px;

        & .body {
            flex-direction: column;
            padding-left: 0;
        }
    }

    .next {
        width: 53px;

        & .body {
            padding-left: 0;
        }
    }

    .multiple {
        width: 135px;

        & .command {
            width: 61px;
        }

        & .plain {
            width: 67px;
        }
    }

    .layout {
        flex: 1;
        min-width: 0;
        overflow: hidden;

        & .body {
            display: grid;
            grid-template-columns: 62px 120px;
            grid-auto-rows: 27px;
            gap: 4px;
            padding-left: 3px;
            line-height: 30px;
        }

        & select,
        & input {
            box-sizing: border-box;
            border: 1px solid #b5b5b5;
            background: #f8f8f8;
        }

        & .dim {
            color: #999;
        }
    }

    .words {
        width: 56px;
        color: #aaa;

        & div {
            display: flex;
            height: 31px;
            gap: 7px;
            align-items: center;
        }
    }

    .smalls {
        display: grid;
        grid-auto-rows: 31px;
        margin-top: -1px;
    }

    .two {
        grid-template-columns: 31px 31px;
    }

    .three {
        grid-template-columns: 31px 31px 31px;
        padding-left: 2px;
    }

    .bigs {
        display: grid;
        grid-template-columns: repeat(4, 50px);
        grid-auto-rows: 44px;
    }

    .panel .view-tools {
        display: grid;
        grid-template-columns: 31px 12px 31px;
        grid-auto-rows: 31px;
        padding: 2px 0 0 1px;
    }

    .panel .measure-tools {
        display: grid;
        grid-template-columns: 50px 15px;
        grid-auto-rows: 44px;
    }

    .panel .create-tools {
        display: grid;
        grid-template-columns: 48px 48px;
        grid-auto-rows: 44px;
        padding-left: 2px;
    }

    .tool {
        display: flex;
        align-items: center;
        justify-content: center;
    }

    .mode .tool {
        height: 44px;
    }

    .caret {
        width: 15px;
        flex: none;
        display: flex;
        align-items: center;
        justify-content: center;

        &::before {
            content: "";
            border: 3px solid transparent;
            border-top: 4px solid #777;
            border-bottom: 0;
        }
    }

    .command {
        display: flex;
        flex: none;
        flex-direction: column;
        align-items: center;
        gap: 5px;
        height: 89px;
        padding-top: 3px;
        background: linear-gradient(#fdfdfd, #f0f0f0);
        box-shadow: inset 0 0 0 1px #cfcfcf;
        text-align: center;

        & span {
            min-width: 100%;
            width: min-content;
        }
    }

    .placement .command:nth-child(3) span {
        width: auto;
        white-space: nowrap;
    }

    .placement .off span {
        width: 53px;
    }

    .on {
        background: linear-gradient(#c4dcf5, #a9cef0);
        box-shadow: inset 0 0 0 1px #1565b8;
    }

    .plain {
        width: 100%;
        background: none;
        box-shadow: none;
    }

    .off {
        color: #b0b0b0;
    }

    .marks {
        position: absolute;
        top: -17px;
        left: 820px;
        fill: none;
        stroke: #ed1c24;
        stroke-width: 5;
        pointer-events: none;
    }

    .quick {
        display: flex;
        align-items: center;
        height: 31px;
        background: #cbcbcb;

        & .tool {
            width: 30px;
        }

        & i {
            width: 1px;
            height: 27px;
            margin: 0 3px 0 5px;
            background: #b5b5b5;
        }

        & .caret::before {
            border-top-color: #333;
        }
    }

    .cut {
        width: 13px;
        overflow: hidden;
    }

    .options {
        height: 33px;
        background: #e5efd7;
    }

    main {
        display: flex;
        flex: 1;
        background: #cbcbcb;
    }

    .workspace {
        display: flex;
        flex: 1;
        flex-direction: column;
        min-width: 0;
    }

    .docs {
        display: flex;
        align-items: flex-end;
        height: 27px;

        & .more {
            margin: 0 3px 2px auto;
        }
    }

    .doc {
        display: flex;
        align-items: center;
        gap: 8px;
        width: 151px;
        height: 25px;
        color: inherit;
        text-decoration: none;

        & .small {
            width: 18px;
            height: 18px;
        }
    }

    .current {
        width: 147px;
        gap: 10px;
        padding: 0 6px 0 7px;
        background: #fff;
        font-weight: 700;

        & button {
            margin-left: auto;
        }
    }

    .stage {
        display: flex;
        flex: 1;
        margin-right: 4px;
        background: #fff;
    }

    .viewport {
        position: relative;
        flex: 1;
        min-width: 0;
    }

    .scene {
        width: 100%;
    }

    .edge {
        stroke: #000;
        stroke-width: 1;
    }

    .edge:first-child {
        fill: none;
    }

    .prompt {
        position: absolute;
        top: 30px;
        left: 734px;
        margin: 0;
        padding-right: 5px;
        background: #f8f8f8;
        color: #000;
        font: 15px/20px "Liberation Sans", Arial, sans-serif;
    }

    .cube {
        position: absolute;
        top: 56px;
        right: 22px;

        & text {
            fill: #8b8f94;
            font: 700 9px Roboto, sans-serif;
        }
    }

    .navbar {
        position: absolute;
        top: 163px;
        right: 1px;
    }

    .scrollbar {
        width: 20px;
        border-right: 1px solid #c3c3c3;
        background: #f0f0f0;
    }

    .thumb {
        height: 21px;
        margin-top: 303px;
        background: #cbcbcb;
    }

    aside {
        width: 88px;
        margin-top: 2px;
        overflow: hidden;
        background: #e1e1e1;

        & h3 {
            margin: 0;
            padding-left: 4px;
            background: #eee;
            font-size: 14px;
            font-weight: 400;
            line-height: 25px;
            white-space: nowrap;
        }

        & ul {
            height: calc(100% - 25px);
            margin: 0;
            padding: 0;
            border-left: 2px solid #cbcbcb;
            list-style: none;
        }

        & li {
            display: flex;
            align-items: center;
            height: 22px;
            color: #6b6b6b;
            white-space: nowrap;
        }

        & .name {
            margin-left: 6px;
        }

        & .small {
            width: 20px;
            height: 20px;
        }
    }

    .guide {
        position: relative;
        flex: none;
        width: 26px;
        height: 22px;

        &.up::before {
            content: "";
            position: absolute;
            top: 0;
            left: 10px;
            height: 11px;
            border-left: 1px dotted #999;
        }

        &.down::after {
            content: "";
            position: absolute;
            top: 11px;
            left: 10px;
            height: 11px;
            border-left: 1px dotted #999;
        }

        &.across {
            background: repeating-linear-gradient(90deg, #999 0 1px, transparent 1px 2px) 10px 11px / 16px 1px no-repeat;
        }

        & button {
            position: absolute;
            z-index: 1;
            top: 5px;
            left: 4px;
            width: 13px;
            height: 13px;
            border: 1px solid #8f8f8f;
            border-radius: 2px;
            background: linear-gradient(#3355a0, #3355a0) center / 9px 1px no-repeat #fafafa;
        }

        & .plus {
            background:
                linear-gradient(#3355a0, #3355a0) center / 9px 1px no-repeat,
                linear-gradient(#3355a0, #3355a0) center / 1px 9px no-repeat,
                #fafafa;
        }
    }

    footer {
        display: flex;
        justify-content: space-between;
        height: 12px;
        background: linear-gradient(#efefef, #efefef) 0 / calc(100% - 101px) 100% no-repeat #fff;
    }

    .left {
        width: 10px;
        margin-left: 3px;
        padding-right: 6px;
        border-right: 1px solid #6d8aa8;
        background: linear-gradient(90deg, #bbb 2px, #e2e2e2 2px 5px, #666 5px 6px, #efefef 6px);
    }

    .right {
        width: 10px;
        margin-right: 101px;
        border-left: 1px solid #6d8aa8;
        border-right: 2px solid #777;
    }
</style>
